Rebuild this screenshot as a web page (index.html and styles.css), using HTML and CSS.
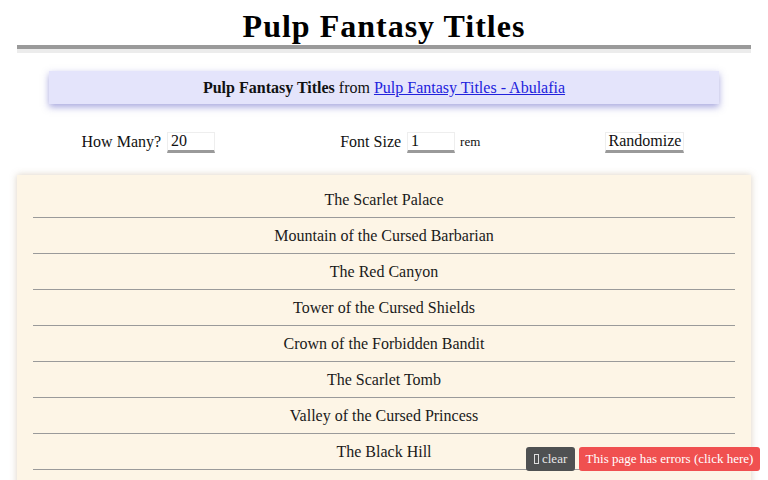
FILE: index.html
```html
<!DOCTYPE html>
<html>
<head>
<meta charset="utf-8">
<link rel="stylesheet" href="styles.css">
</head>
<body>
<h1 class="title">Pulp Fantasy Titles</h1>
<div class="info"><b>Pulp Fantasy Titles</b> from <a href="#">Pulp Fantasy Titles - Abulafia</a></div>
<div class="controls">
  <div class="ctrl"><span class="lbl">How Many?</span><input class="field" type="text" value="20"></div>
  <div class="ctrl"><span class="lbl">Font Size</span><input class="field" type="text" value="1"><span class="unit">rem</span></div>
  <div class="ctrl"><button class="btn">Randomize</button></div>
</div>
<ul class="list">
  <li class="item">The Scarlet Palace</li>
  <li class="item">Mountain of the Cursed Barbarian</li>
  <li class="item">The Red Canyon</li>
  <li class="item">Tower of the Cursed Shields</li>
  <li class="item">Crown of the Forbidden Bandit</li>
  <li class="item">The Scarlet Tomb</li>
  <li class="item">Valley of the Cursed Princess</li>
  <li class="item">The Black Hill</li>
  <li class="item">Sword of the Iron Witch</li>
  <li class="item">The Crimson Gate</li>
  <li class="item">Queen of the Lost City</li>
  <li class="item">The Shadow Throne</li>
</ul>
<div class="errbar">
  <span class="clear"><span class="tofu"></span> clear</span>
  <span class="err">This page has errors (click here)</span>
</div>
</body>
</html>
```
FILE: styles.css
```css
html, body {
  margin: 0;
  background: #fff;
}
body {
  padding: 0 17px;
  font-family: "Liberation Serif", "Times New Roman", serif;
  font-size: 16px;
  color: #111;
}
.title {
  margin: 8px 0 0;
  font-size: 32px;
  line-height: 37px;
  font-weight: bold;
  text-align: center;
  color: #000;
  letter-spacing: 1px;
  border-bottom: 4px solid #9a9a9a;
  box-shadow: 0 4px 0 #ececec;
}
.info {
  margin: 22px 32px 0;
  padding: 7px 0;
  line-height: 19px;
  text-align: center;
  background: #e4e4fb;
  box-shadow: 0 3px 7px rgba(80, 80, 190, 0.5);
}
.info a {
  color: #2222dd;
}
.controls {
  margin-top: 27px;
  padding: 0 4px 0 2px;
  display: flex;
  justify-content: space-around;
  align-items: center;
  height: 22px;
}
.ctrl {
  display: flex;
  align-items: center;
}
.lbl {
  margin-right: 6px;
}
.field {
  box-sizing: border-box;
  width: 48px;
  height: 21px;
  padding: 0 3px;
  margin: 0;
  border: 1px solid #eee;
  border-bottom: 3px solid #9a9a9a;
  font-family: "Liberation Serif", serif;
  font-size: 16px;
  line-height: 17px;
  color: #111;
  background: #fff;
  outline: none;
}
.unit {
  margin-left: 5px;
  font-size: 13px;
}
.btn {
  box-sizing: border-box;
  width: 79px;
  height: 21px;
  padding: 0 0 2px;
  margin: 0;
  border: 1px solid #eee;
  border-bottom: 3px solid #9a9a9a;
  background: #fff;
  font-family: "Liberation Serif", serif;
  font-size: 16px;
  line-height: 15px;
  color: #111;
}
.list {
  list-style: none;
  margin: 22px 0 0;
  padding: 7px 16px 10px;
  background: #fdf5e6;
  box-shadow: 0 0 7px rgba(150, 120, 80, 0.35);
}
.item {
  padding: 8px 0;
  line-height: 19px;
  text-align: center;
  border-bottom: 1px solid #9a9a9a;
  color: #1a1a1a;
}
.errbar {
  position: fixed;
  right: 8px;
  bottom: 9px;
  display: flex;
  gap: 4px;
  font-size: 13px;
  line-height: 16px;
}
.clear {
  width: 49px;
  box-sizing: border-box;
  padding: 4px 0;
  text-align: center;
  background: #4f5152;
  color: #e8e8e8;
  border-radius: 3px;
}
.tofu {
  display: inline-block;
  width: 3px;
  height: 8px;
  border: 1px solid #ddd;
  vertical-align: -1px;
}
.err {
  width: 181px;
  box-sizing: border-box;
  padding: 4px 0;
  text-align: center;
  background: #f05050;
  color: #fff;
  border-radius: 3px;
}
```
